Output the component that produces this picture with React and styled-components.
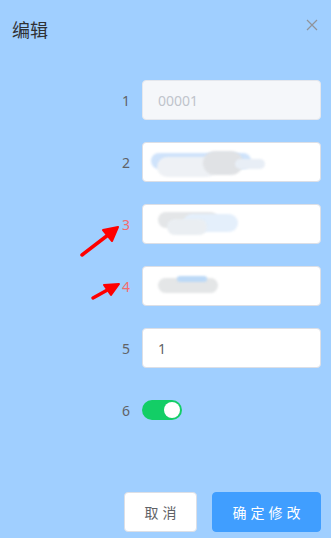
import React from 'react';
import styled, { createGlobalStyle } from 'styled-components';

const Global = createGlobalStyle`
  html, body {
    margin: 0;
    padding: 0;
    background: #a0cfff;
    font-family: "Noto Sans", "Noto Sans CJK SC", "Liberation Sans", sans-serif;
  }
`;

const Dialog = styled.div`
  position: relative;
  width: 331px;
  height: 538px;
  background: #a0cfff;
  box-sizing: border-box;
`;

const Header = styled.div`
  display: flex;
  justify-content: space-between;
  align-items: flex-start;
  padding: 17px 12px 0 12px;
  height: 80px;
  box-sizing: border-box;
`;

const Title = styled.span`
  font-size: 18px;
  line-height: 26px;
  color: #303133;
`;

const Close = styled.button`
  background: transparent;
  border: 0;
  padding: 0;
  margin-top: 2px;
  margin-right: -1px;
  width: 14px;
  height: 14px;
  cursor: pointer;
  display: flex;
`;

const Form = styled.div`
  display: flex;
  flex-direction: column;
  gap: 22px;
  padding-right: 10px;
`;

const Row = styled.div`
  display: flex;
  align-items: center;
  height: 40px;
`;

const Label = styled.label`
  width: 142px;
  box-sizing: border-box;
  padding-right: 12px;
  text-align: right;
  font-size: 14px;
  color: ${p => (p.$warn ? '#f56c6c' : '#606266')};
`;

const Field = styled.div`
  position: relative;
  flex: 1;
  height: 40px;
  box-sizing: border-box;
  border: 1px solid ${p => (p.$disabled ? '#e4e7ed' : '#dcdfe6')};
  border-radius: 4px;
  background: ${p => (p.$disabled ? '#f5f7fa' : '#fff')};
  padding: 0 15px;
  display: flex;
  align-items: center;
  font-size: 14px;
  color: ${p => (p.$disabled ? '#c0c4cc' : '#606266')};
  overflow: hidden;
`;

const Smudge = styled.span`
  position: absolute;
  top: ${p => p.$top}px;
  left: ${p => p.$left}px;
  width: ${p => p.$w}px;
  height: ${p => p.$h}px;
  border-radius: ${p => p.$h / 2}px;
  background: ${p => p.$bg};
  filter: blur(1px);
`;

const Switch = styled.span`
  position: relative;
  display: inline-block;
  width: 40px;
  height: 20px;
  border-radius: 10px;
  background: #13ce66;

  &::after {
    content: '';
    position: absolute;
    top: 2px;
    right: 2px;
    width: 16px;
    height: 16px;
    border-radius: 50%;
    background: #fff;
  }
`;

const Footer = styled.div`
  display: flex;
  justify-content: flex-end;
  gap: 15px;
  padding: 62px 10px 0 0;
`;

const Button = styled.button`
  height: 40px;
  padding: 0 0 0 4px;
  box-sizing: border-box;
  white-space: nowrap;
  border-radius: 4px;
  font-family: inherit;
  font-size: 14px;
  letter-spacing: 4px;
  border: 1px solid ${p => (p.$primary ? '#409eff' : '#dcdfe6')};
  background: ${p => (p.$primary ? '#409eff' : '#fff')};
  color: ${p => (p.$primary ? '#fff' : '#606266')};
  width: ${p => p.$w}px;
  cursor: pointer;
`;

const Arrow = styled.svg`
  position: absolute;
  left: 0;
  top: 0;
  pointer-events: none;
`;

const rows = [
  { n: '1', disabled: true, value: '00001' },
  {
    n: '2',
    smudges: [
      { top: 10, left: 8, w: 100, h: 16, bg: '#cfe3fb' },
      { top: 14, left: 14, w: 60, h: 20, bg: '#eef1f5' },
      { top: 8, left: 60, w: 40, h: 24, bg: '#e0e2e5' },
      { top: 16, left: 92, w: 30, h: 10, bg: '#e8eef6' },
    ],
  },
  {
    n: '3',
    warn: true,
    smudges: [
      { top: 7, left: 15, w: 60, h: 16, bg: '#e4e6e8' },
      { top: 9, left: 40, w: 55, h: 18, bg: '#e4effb' },
      { top: 14, left: 24, w: 40, h: 16, bg: '#eaeef2' },
    ],
  },
  {
    n: '4',
    warn: true,
    smudges: [
      { top: 11, left: 15, w: 60, h: 15, bg: '#e4e6e7' },
      { top: 9, left: 34, w: 30, h: 6, bg: '#bcd9f7' },
    ],
  },
  { n: '5', value: '1' },
];

const App = () => (
  <>
    <Global />
    <Dialog>
      <Header>
        <Title>编辑</Title>
        <Close aria-label="close">
          <svg width="12" height="12" viewBox="0 0 12 12">
            <path d="M1 1 L11 11 M11 1 L1 11" stroke="#909399" strokeWidth="1.2" />
          </svg>
        </Close>
      </Header>
      <Form>
        {rows.map(r => (
          <Row key={r.n}>
            <Label $warn={r.warn}>{r.n}</Label>
            <Field $disabled={r.disabled}>
              {r.value}
              {(r.smudges || []).map((s, i) => (
                <Smudge key={i} $top={s.top} $left={s.left} $w={s.w} $h={s.h} $bg={s.bg} />
              ))}
            </Field>
          </Row>
        ))}
        <Row>
          <Label>6</Label>
          <Switch />
        </Row>
      </Form>
      <Footer>
        <Button $w={73}>取消</Button>
        <Button $primary $w={109}>确定修改</Button>
      </Footer>
      <Arrow width="331" height="538">
        <path d="M82 255 L108 235" stroke="#f00" strokeWidth="3.5" strokeLinecap="round" />
        <path d="M118 227 L103 230 L112 241 Z" fill="#f00" stroke="#f00" strokeWidth="2" strokeLinejoin="round" />
        <path d="M93 298 L111 288" stroke="#f00" strokeWidth="3.5" strokeLinecap="round" />
        <path d="M119 284 L104 285 L111 295 Z" fill="#f00" stroke="#f00" strokeWidth="2" strokeLinejoin="round" />
      </Arrow>
    </Dialog>
  </>
);

export default App;
